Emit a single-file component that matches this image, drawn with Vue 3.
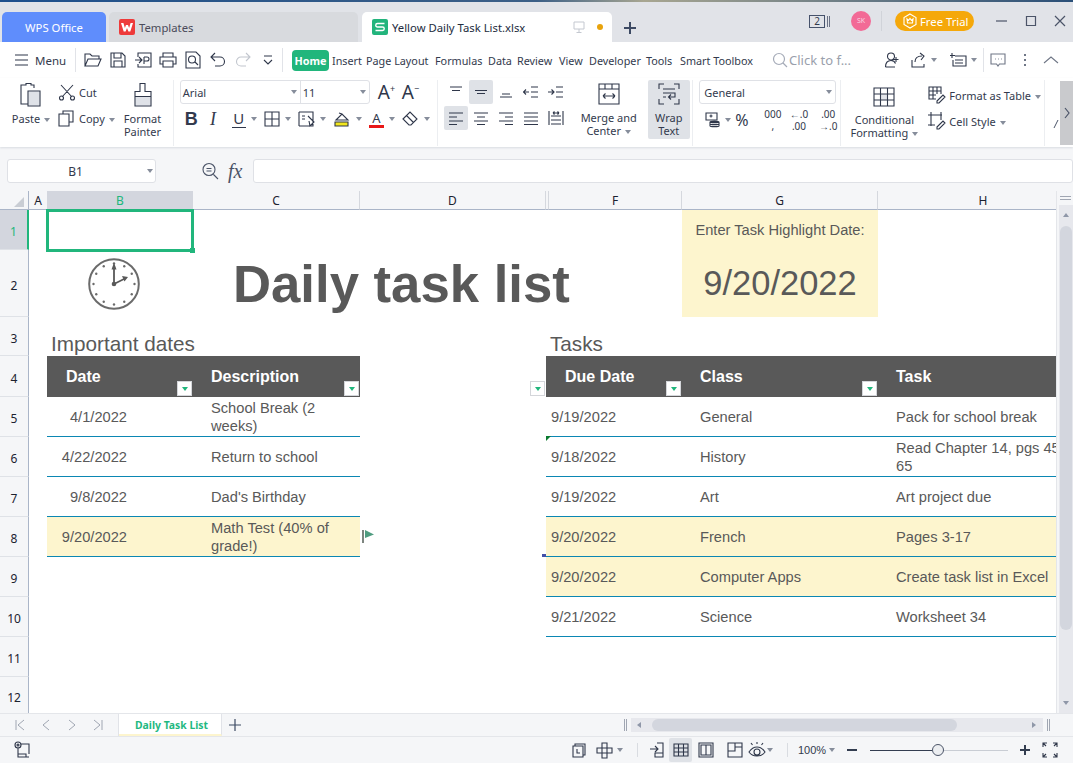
<template>
  <div class="app">
    <div class="wallpaper"></div>

    <!-- Title bar with tabs -->
    <div class="tabbar">
      <div class="tab tab-wps">WPS Office</div>
      <div class="tab tab-tpl">
        <span class="logo logo-w">
          <svg width="12" height="10" viewBox="0 0 12 10"><path d="M0 1h2.4l1.5 5L5 3h2l1.100 3 1.500-5H12L9.300 9.500H7.400L6 6 4.600 9.500H2.700z" fill="#fff" /></svg>
        </span>
        Templates
      </div>
      <div class="tab tab-file">
        <span class="logo logo-s">
          <svg width="12" height="12" viewBox="0 0 12 12"><path d="M10.500 2.500H3.500a1 1 0 000 3.500h5a1.500 1.500 0 010 3.500h-7" fill="none" stroke="#fff" stroke-width="1.400" /></svg>
        </span>
        <span class="tab-name">Yellow Daily Task List.xlsx</span>
        <svg class="tab-monitor" width="14" height="14" viewBox="0 0 14 14"><path d="M2 2h10v7H2zM7 9v3M4.500 12.500h5" fill="none" stroke="#c4c8d0" /></svg>
        <span class="tab-dot"></span>
      </div>
      <svg class="tab-plus" width="14" height="14" viewBox="0 0 14 14"><path d="M7 1v12M1 7h12" stroke="#3d4a63" stroke-width="2" /></svg>
      <div class="spacer"></div>
      <div class="count-box"><span>2</span><i></i><i></i></div>
      <div class="avatar">SK</div>
      <span class="bar-sep"></span>
      <div class="trial">
        <svg width="16" height="16" viewBox="0 0 16 16"><path d="M8 1l6 3.500v7L8 15l-6-3.500v-7zM5 6l1.500 1.500L8 5.500l1.500 2L11 6l-.5 4h-5z" fill="none" stroke="#fff" stroke-width="1.100" /></svg>
        Free Trial
      </div>
      <div class="winbtns">
        <svg width="14" height="14" viewBox="0 0 14 14"><path d="M1 7h11" stroke="#4b5468" stroke-width="1.200" /></svg>
        <svg width="14" height="14" viewBox="0 0 14 14"><path d="M2.500 2.500h9v9h-9z" fill="none" stroke="#4b5468" stroke-width="1.200" /></svg>
        <svg width="14" height="14" viewBox="0 0 14 14"><path d="M2 2l10 10M12 2L2 12" stroke="#4b5468" stroke-width="1.200" /></svg>
      </div>
    </div>

    <!-- Quick access and menu tabs -->
    <div class="quickbar">
      <svg class="ico menu-ico" width="16" height="14" viewBox="0 0 16 14"><path d="M1 2h13M1 7h13M1 12h13" /></svg>
      <span class="menu-label">Menu</span>
      <span class="q-sep first"></span>
      <div class="quick-icons">
        <svg v-for="q in quickIcons" :key="q.d" class="ico" :class="{ dim: q.dim }" width="18" height="20" viewBox="0 0 18 20"><path :d="q.d" /></svg>
      </div>
      <span class="q-sep"></span>
      <div class="menu-tabs">
        <span class="menu-tab home">Home</span>
        <span v-for="m in menus" :key="m.t" class="menu-tab" :style="{ width: m.w + 'px' }">{{ m.t }}</span>
      </div>
      <div class="search">
        <svg width="16" height="16" viewBox="0 0 16 16"><path d="M7 1.500a5.500 5.500 0 100 11 5.500 5.500 0 000-11zM11 11l4 4" fill="none" stroke="#a5abb8" stroke-width="1.200" /></svg>
        <span>Click to f...</span>
      </div>
      <div class="quick-right">
        <svg class="ico" width="16" height="18" viewBox="0 0 16 18"><path d="M7 2a3.500 3.500 0 100 7 3.500 3.500 0 000-7zM1.500 16c0-4 2-6.500 5.500-6.500s4 1.500 4.500 3M1.500 16H11M12 6v5M9.500 8.500h5" /></svg>
        <svg class="ico" width="16" height="18" viewBox="0 0 16 18"><path d="M1 9v7h12v-3M4 11c0-4 3-6 7-6M9 2l4 3-3 4" /></svg>
        <span class="caret"></span>
        <svg class="ico" width="17" height="18" viewBox="0 0 17 18"><path d="M5 5h11v10H3V9M5 9h8M5 12h8M2 2v5M0 4.500h5" /></svg>
        <span class="caret"></span>
        <span class="q-sep short"></span>
        <svg class="ico soft" width="16" height="16" viewBox="0 0 16 16"><path d="M1 2h14v10H9.500L8 14l-1.500-2H1zM5 7h.8M8 7h.8M11 7h.8" /></svg>
        <span class="dots"><i></i><i></i><i></i></span>
        <svg class="ico soft" width="16" height="10" viewBox="0 0 16 10"><path d="M1 8l7-6 7 6" /></svg>
      </div>
    </div>

    <!-- Ribbon -->
    <div class="ribbon">
      <div class="group g-clip">
        <div class="paste">
          <svg class="ico" width="24" height="25" viewBox="0 0 24 25"><path d="M15 6V3h-3V1.500H7V3H2v19h7" /><path d="M9.500 9.500h11v14h-11z" fill="#dfe2e8" stroke="none" /><path d="M9 9h12v15H9z" /></svg>
          <span class="lbl">Paste<span class="caret"></span></span>
        </div>
        <div class="cutcopy">
          <div class="row">
            <svg class="ico" width="18" height="17" viewBox="0 0 18 17"><path d="M3 1l11 12M15 1L4 13M3.500 12a2 2 0 100 4 2 2 0 000-4zM14.500 12a2 2 0 100 4 2 2 0 000-4z" /></svg>
            <span class="lbl">Cut</span>
          </div>
          <div class="row">
            <svg class="ico" width="18" height="17" viewBox="0 0 18 17"><path d="M5 4V1h10v11h-4M1 4h10v12H1z" /></svg>
            <span class="lbl">Copy<span class="caret"></span></span>
          </div>
        </div>
        <div class="painter">
          <svg class="ico" width="20" height="25" viewBox="0 0 20 25"><path d="M2.500 15h15v8.500h-15z" fill="#dfe2e8" stroke="none" /><path d="M7 1.500h5v8h6v5H2v-5h5zM2 14.500V24h16v-9.500" /></svg>
          <span class="lbl center">Format<br />Painter</span>
        </div>
      </div>

      <div class="group g-font">
        <div class="row row-top">
          <div class="select font-select">
            <div class="sel-part sel-name">Arial<span class="caret"></span></div>
            <div class="sel-part sel-size">11<span class="caret"></span></div>
          </div>
          <span class="a-grow">A<sup>+</sup></span>
          <span class="a-grow">A<sup>−</sup></span>
        </div>
        <div class="row row-tools">
          <span class="t-bold">B</span>
          <span class="t-ital">I</span>
          <span class="t-under">U</span><span class="caret"></span>
          <svg class="ico" width="16" height="16" viewBox="0 0 16 16"><path d="M1 1h14v14H1zM8 1v14M1 8h14" /></svg><span class="caret"></span>
          <svg class="ico" width="17" height="17" viewBox="0 0 17 17"><path d="M1 1h14v14H1M1 1v14M4 5h3M4 8h3M10 5l6 6-4 4-1-5" /></svg><span class="caret"></span>
          <svg class="ico" width="18" height="18" viewBox="0 0 18 18"><path d="M3 10l6-6 6 6H3zM6 3l3 1" /><path d="M2 12h13v4H2z" fill="#f2e61c" /></svg><span class="caret"></span>
          <span class="t-color">A</span><span class="caret"></span>
          <svg class="ico" width="17" height="16" viewBox="0 0 17 16"><path d="M1 8l7-7 7 7-6 6H7zM4.500 4.500l7 7" /></svg><span class="caret"></span>
        </div>
      </div>

      <div class="group g-align">
        <div class="align-grid">
          <span v-for="(a, i) in alignIcons" :key="i" class="align-cell" :class="{ on: a.on }">
            <svg class="ico" width="16" height="16" viewBox="0 0 16 16"><path :d="a.d" /></svg>
          </span>
        </div>
        <div class="big-tool merge">
          <svg class="ico" width="22" height="22" viewBox="0 0 22 22"><path d="M1 1h20v20H1zM1 6h20M7 1v5M14 1v5M5 13h12M5 13l2.500-2.500M5 13l2.500 2.500M17 13l-2.500-2.500M17 13l-2.500 2.500" /></svg>
          <span class="lbl center">Merge and<br />Center<span class="caret"></span></span>
        </div>
        <div class="big-tool wrap">
          <svg class="ico" width="24" height="22" viewBox="0 0 24 22"><path d="M2 6V1h5M17 1h5v5M2 16v5h5M17 21h5v-5M6 6h12M6 10h12v4h-6M14 11.500L11.500 14l2.500 2.500M6 14h3" /></svg>
          <span class="lbl center">Wrap<br />Text</span>
        </div>
      </div>

      <div class="group g-num">
        <div class="select num-select">General<span class="caret"></span></div>
        <div class="row row-num">
          <svg class="ico" width="16" height="18" viewBox="0 0 16 18"><path d="M1 2h11v7H1zM6 3.500v3M4.500 5h3M5 11c0-1 9-1 9 0v4c0 1-9 1-9 0zM5 11c0 1 9 1 9 0M5 13c0 1 9 1 9 0" /></svg><span class="caret"></span>
          <span class="t-pct">%</span>
          <span class="t-thou">000<br />,</span>
          <span class="t-dec">←.0<br />.00</span>
          <span class="t-dec">.00<br />→.0</span>
        </div>
      </div>

      <div class="group g-style">
        <div class="big-tool cond">
          <svg class="ico" width="22" height="20" viewBox="0 0 22 20"><path d="M7.500 7h7v6h-7z" fill="#e3e5ea" stroke="none" /><path d="M1 1h20v18H1zM1 7h20M1 13h20M7.500 1v18M14.500 1v18" /></svg>
          <span class="lbl center">Conditional<br />Formatting<span class="caret"></span></span>
        </div>
        <div class="style-col">
          <div class="row">
            <svg class="ico" width="18" height="18" viewBox="0 0 18 18"><path d="M8 13H1V1h12v7M1 5h12M1 9h7M5 1v12M9 1v7M9 15l6-6 2 2-6 6H9z" /></svg>
            <span class="lbl">Format as Table<span class="caret"></span></span>
          </div>
          <div class="row">
            <svg class="ico" width="18" height="18" viewBox="0 0 18 18"><path d="M3 0v14M0 3h14M13 0v8M0 13h7M9 15l6-6 2 2-6 6H9z" /></svg>
            <span class="lbl">Cell Style<span class="caret"></span></span>
          </div>
        </div>
      </div>

      <svg class="clipped" width="6" height="8" viewBox="0 0 6 8"><path d="M5 0L1 8" stroke="#4b5468" /></svg>
      <div class="ribbon-more">
        <svg width="8" height="12" viewBox="0 0 8 12"><path d="M2 1l4 5-4 5" fill="none" stroke="#4b5468" stroke-width="1.200" /></svg>
      </div>
    </div>

    <!-- Formula bar -->
    <div class="formula">
      <div class="namebox"><span>B1</span><span class="caret"></span></div>
      <svg class="zoom-ico" width="18" height="18" viewBox="0 0 18 18"><path d="M8 1.500a6 6 0 100 12 6 6 0 000-12zM12.500 12.500L17 17M5.500 6.500h5M5.500 9h5" fill="none" stroke="#4b5468" stroke-width="1.100" /></svg>
      <span class="fx">fx</span>
      <div class="fx-input"></div>
    </div>

    <!-- Sheet -->
    <div class="workbook">
      <div class="grid">
        <div class="corner"><i></i></div>
        <div v-for="(c, i) in colHeads" :key="c.t + i" class="col-head" :class="{ active: c.on, sep: c.sep }" :style="{ gridColumn: c.col }">{{ c.t }}</div>
        <div v-for="r in 12" :key="r" class="row-head" :class="{ active: r === 1 }" :style="{ gridRow: r + 1 }">{{ r }}</div>

        <div class="highlight-top">Enter Task Highlight Date:</div>
        <div class="highlight-date">9/20/2022</div>

        <div class="clock-cell">
          <svg width="52" height="52" viewBox="0 0 52 52">
            <circle cx="26" cy="26" r="24.800" fill="#fff" stroke="#6b6b6b" stroke-width="2" />
            <circle v-for="t in clockTicks" :key="t.x" :cx="t.x" :cy="t.y" r="1.200" fill="#6b6b6b" />
            <path d="M26 26V9M26 26l12-6" stroke="#595959" stroke-width="1.800" fill="none" />
            <path d="M26 4.500l-2.500 7h5zM40 19l-6-1 2.500 5.500z" fill="#595959" />
            <circle cx="26" cy="26" r="2.300" fill="#595959" />
          </svg>
        </div>
        <div class="title">Daily task list</div>

        <div class="section sec-left">Important dates</div>
        <div class="section sec-right">Tasks</div>

        <div v-for="h in headers" :key="h.t" class="th" :class="h.cls">{{ h.t }}</div>

        <div
          v-for="(c, i) in cells"
          :key="i"
          class="td"
          :class="[c.cls, { yellow: c.yellow }]"
          :style="{ gridColumn: c.col, gridRow: c.row }"
        >
          <span>{{ c.t }}</span>
        </div>

        <div v-for="f in filters" :key="f" class="filter" :style="{ gridColumn: f }"><i></i></div>

        <div class="selection"><i></i></div>
        <svg class="flag" width="14" height="14" viewBox="0 0 14 14"><path d="M1 0v13" stroke="#7d8580" stroke-width="2" /><path d="M3 0l9 4.500L3 8z" fill="#4f9c80" /></svg>
        <i class="error-mark"></i>
        <i class="blue-mark"></i>
      </div>

      <div class="vscroll">
        <div class="split-h"></div>
        <div class="track">
          <i class="arrow-up"></i>
          <div class="thumb"></div>
          <i class="arrow-down"></i>
        </div>
      </div>
    </div>

    <!-- Sheet tabs -->
    <div class="sheetbar">
      <div class="sheet-nav">
        <svg v-for="n in navIcons" :key="n" width="12" height="14" viewBox="0 0 12 14"><path :d="n" fill="none" stroke="#a0a6b2" /></svg>
      </div>
      <div class="sheet-tab">Daily Task List</div>
      <svg class="sheet-add" width="14" height="14" viewBox="0 0 14 14"><path d="M7 1v12M1 7h12" stroke="#3d4a63" stroke-width="1.200" /></svg>
      <div class="spacer"></div>
      <span class="splitter"></span>
      <div class="hscroll">
        <i class="arrow-left"></i>
        <div class="hthumb"></div>
        <i class="arrow-right"></i>
      </div>
      <span class="splitter"></span>
    </div>

    <!-- Status bar -->
    <div class="status">
      <svg class="ico status-first" width="18" height="18" viewBox="0 0 18 18"><path d="M4 1a3 3 0 100 6 3 3 0 000-6zM4 3a1 1 0 100 2 1 1 0 000-2zM7 3h8v10M4 7v9h8v-3H4M12 16h3" /></svg>
      <div class="spacer"></div>
      <svg class="ico" width="14" height="15" viewBox="0 0 14 15"><path d="M3 3V1h10v11h-2M1 3h10v11H1zM5 6v4h3" /></svg>
      <svg class="ico st-view" width="17" height="17" viewBox="0 0 17 17"><path d="M6 1h5v5h5v5h-5v5H6v-5H1V6h5zM6 6h5v5H6z" /></svg>
      <span class="caret"></span>
      <span class="q-sep st-sep"></span>
      <svg class="ico st-read" width="15" height="16" viewBox="0 0 15 16"><path d="M7 1h6v14H5v-4h8M0 7h8M5 4l3 3-3 3" /></svg>
      <span class="st-on">
        <svg class="ico" width="16" height="16" viewBox="0 0 16 16"><path d="M1 2h14v12H1zM1 6h14M1 10h14M5.500 2v12M10.500 2v12" /></svg>
      </span>
      <svg class="ico st-gap" width="16" height="16" viewBox="0 0 16 16"><path d="M1 1h14v14H1zM3 3h10v10H3zM8 3v10" /></svg>
      <svg class="ico st-gap2" width="16" height="16" viewBox="0 0 16 16"><path d="M1 1h14v14H1zM1 9h7V1M8 5h7" /></svg>
      <svg class="ico st-eye" width="18" height="18" viewBox="0 0 18 18"><path d="M1 11c2-3 5-5 8-5s6 2 8 5c-2 3-5 4-8 4s-6-1-8-4zM9 8a3 3 0 100 6 3 3 0 000-6zM9 1v2M3 2l1.500 2M15 2l-1.500 2" /></svg>
      <span class="caret eye-caret"></span>
      <span class="q-sep st-sep"></span>
      <span class="zoom-pct">100%</span><span class="caret"></span>
      <span class="zoom-minus"></span>
      <div class="slider"><div class="slider-fill"></div><div class="slider-knob"></div><div class="slider-rest"></div></div>
      <svg class="zoom-plus" width="12" height="12" viewBox="0 0 12 12"><path d="M6 1v10M1 6h10" stroke="#333d50" stroke-width="2" /></svg>
      <svg class="ico st-full" width="16" height="16" viewBox="0 0 16 16"><path d="M1 5V1h4M1 1l3 3M15 5V1h-4M15 1l-3 3M1 11v4h4M1 15l3-3M15 11v4h-4M15 15l-3-3" /></svg>
    </div>
  </div>
</template>

<script setup>
const quickIcons = [
  { d: 'M1 16V4h5l2 2h7v3M1 16l3-7h13l-3 7z' },
  { d: 'M2 3h11l3 3v11H2zM5 3v5h7V3M5 17v-6h8v6' },
  { d: 'M4 7V3h13v14H4v-3M1 10h7M5 7l3 3-3 3M10 7h3a2 2 0 010 4h-3V7m0 4v3' },
  { d: 'M4 7V3h10v4M4 14H1V7h16v7h-3M4 11h10v6H4z' },
  { d: 'M2 2h10l4 4v12H2zM8 6a3.500 3.500 0 100 7 3.500 3.500 0 000-7zM11 12l3 3' },
  { d: 'M6 3L2 7l4 4M2 7h9a4.500 4.500 0 010 9H6' },
  { d: 'M12 3l4 4-4 4M16 7H7a4.500 4.500 0 000 9h5', dim: true },
  { d: 'M5 6h8M5 10l4 4 4-4' }
]

const menus = [
  { t: 'Insert', w: 34 },
  { t: 'Page Layout', w: 69 },
  { t: 'Formulas', w: 53 },
  { t: 'Data', w: 29 },
  { t: 'Review', w: 42 },
  { t: 'View', w: 30 },
  { t: 'Developer', w: 57 },
  { t: 'Tools', w: 34 },
  { t: 'Smart Toolbox', w: 74 }
]

const alignIcons = [
  { d: 'M2 3h12M4 6.500h8' },
  { d: 'M2 6.500h12M4 9.500h8', on: true },
  { d: 'M4 10h8M2 13h12' },
  { d: 'M8 3h7M8 13h7M8 8h7M6 8H0M3 5.500L.5 8 3 10.500' },
  { d: 'M8 3h7M8 13h7M8 8h7M0 8h6M3.500 5.500L6 8l-2.500 2.500' },
  { d: 'M1 3h14M1 7h8M1 11h14M1 14.500h8', on: true },
  { d: 'M1 3h14M4 7h8M1 11h14M4 14.500h8' },
  { d: 'M1 3h14M7 7h8M1 11h14M7 14.500h8' },
  { d: 'M1 3h14M1 7h14M1 11h14M1 14.500h14' },
  { d: 'M1 1v14M15 1v14M3 6h10M3 10h10M3 14h10M5 3h6M5 3l1.500-1.500M5 3l1.500 1.500M11 3L9.500 1.500M11 3L9.500 4.500' }
]

const colHeads = [
  { t: 'A', col: 2 },
  { t: 'B', col: 3, on: true },
  { t: 'C', col: 4, sep: true },
  { t: 'D', col: 5, sep: true },
  { t: '', col: 6, sep: true },
  { t: 'F', col: 7, sep: true },
  { t: 'G', col: 8, sep: true },
  { t: 'H', col: 9 }
]

const headers = [
  { t: 'Date', cls: 'th-date' },
  { t: 'Description', cls: 'th-desc' },
  { t: 'Due Date', cls: 'th-due' },
  { t: 'Class', cls: 'th-class' },
  { t: 'Task', cls: 'th-task' }
]

const leftRows = [
  ['4/1/2022', 'School Break (2 weeks)'],
  ['4/22/2022', 'Return to school'],
  ['9/8/2022', "Dad's Birthday"],
  ['9/20/2022', 'Math Test (40% of grade!)', true]
]

const rightRows = [
  ['9/19/2022', 'General', 'Pack for school break'],
  ['9/18/2022', 'History', 'Read Chapter 14, pgs 45-65'],
  ['9/19/2022', 'Art', 'Art project due'],
  ['9/20/2022', 'French', 'Pages 3-17', true],
  ['9/20/2022', 'Computer Apps', 'Create task list in Excel', true],
  ['9/21/2022', 'Science', 'Worksheet 34']
]

const cells = []
leftRows.forEach((r, i) => {
  const row = i + 6
  cells.push({ t: r[0], col: '3', row, cls: 'td-date', yellow: r[2] })
  cells.push({ t: r[1], col: '4', row, cls: 'td-desc', yellow: r[2] })
})
rightRows.forEach((r, i) => {
  const row = i + 6
  cells.push({ t: r[0], col: '6 / 8', row, cls: 'td-due', yellow: r[3] })
  cells.push({ t: r[1], col: '8', row, cls: 'td-text', yellow: r[3] })
  cells.push({ t: r[2], col: '9', row, cls: 'td-task', yellow: r[3] })
})

const filters = [3, 4, 5, 7, 8]

const clockTicks = Array.from({ length: 12 }, (_, i) => {
  const a = (i * Math.PI) / 6
  return { x: 26 + Math.sin(a) * 20.5, y: 26 - Math.cos(a) * 20.5 }
})

const navIcons = [
  'M2 2v10M10 2L4 7l6 5',
  'M9 2L3 7l6 5',
  'M3 2l6 5-6 5',
  'M2 2l6 5-6 5M10 2v10'
]
</script>

<style>
html,
body {
  margin: 0;
  overflow: hidden;
}
</style>

<style scoped>
.app {
  width: 1073px;
  height: 763px;
  display: flex;
  flex-direction: column;
  font-family: "Noto Sans", sans-serif;
  font-size: 11.5px;
  color: #333a4d;
  background: #f5f6f8;
  overflow: hidden;
}

.spacer {
  flex: 1;
}

.wallpaper {
  height: 2px;
  background: linear-gradient(90deg, #1d4f8c, #3c5f86 50%, #a8a691 60%, #2a4f78);
}

.ico {
  flex: none;
  fill: none;
  stroke: #2f374a;
  stroke-width: 1.100;
}

.ico.dim {
  stroke: #c2c6ce;
}

.ico.soft {
  stroke: #6f7686;
}

.caret {
  display: inline-block;
  flex: none;
  width: 0;
  height: 0;
  border: 3px solid transparent;
  border-top: 4px solid #868d9b;
  border-bottom: 0;
  margin-left: 4px;
  vertical-align: middle;
}

/* Tabs */
.tabbar {
  height: 40px;
  flex: none;
  display: flex;
  align-items: flex-end;
  background: #e1e3e8;
  padding-left: 2px;
}

.tab {
  height: 30px;
  display: flex;
  align-items: center;
  border-radius: 5px 5px 0 0;
  font-size: 11.3px;
  box-sizing: border-box;
  white-space: nowrap;
}

.tab-wps {
  width: 104px;
  justify-content: center;
  background: #5f8dfc;
  color: #fff;
}

.tab-tpl {
  width: 249px;
  margin-left: 3px;
  padding-left: 10px;
  background: #d8dade;
  color: #4b4b5a;
  gap: 4px;
}

.tab-file {
  width: 250px;
  margin-left: 4px;
  padding-left: 10px;
  background: #fff;
  color: #222b3d;
  gap: 5px;
}

.logo {
  width: 16px;
  height: 16px;
  border-radius: 2px;
  display: flex;
  align-items: center;
  justify-content: center;
}

.logo-w {
  background: #ee3a3a;
}

.logo-s {
  background: #22b47c;
}

.tab-name {
  width: 175px;
  margin-left: -1px;
}

.tab-dot {
  width: 6px;
  height: 6px;
  border-radius: 50%;
  background: #e8a30c;
  margin-left: 6px;
}

.tab-plus {
  margin: 0 0 7px 11px;
}

.count-box {
  align-self: center;
  display: flex;
  align-items: center;
  gap: 1px;
  margin-top: -2px;
}

.count-box span {
  width: 14px;
  height: 11px;
  border: 1px solid #46526b;
  font-size: 10px;
  line-height: 11px;
  text-align: center;
  margin-right: 1px;
}

.count-box i {
  width: 1px;
  height: 11px;
  background: #6b7386;
}

.avatar {
  align-self: center;
  margin: -2px 0 0 21px;
  width: 20px;
  height: 20px;
  border-radius: 50%;
  background: #f26a96;
  color: #f8d5e1;
  font-size: 7px;
  line-height: 20px;
  text-align: center;
}

.bar-sep {
  align-self: center;
  width: 1px;
  height: 20px;
  margin: -2px 13px 0 10px;
  background: #d0d3d9;
}

.trial {
  align-self: center;
  margin-top: -2px;
  width: 79px;
  height: 20px;
  box-sizing: border-box;
  padding-left: 7px;
  display: flex;
  align-items: center;
  gap: 2px;
  border-radius: 10px;
  background: #f5a80a;
  color: #fff;
  font-size: 11.3px;
  white-space: nowrap;
}

.winbtns {
  align-self: center;
  margin: -2px 6px 0 21px;
  display: flex;
  gap: 15px;
}

/* Quick access */
.quickbar {
  height: 36px;
  flex: none;
  display: flex;
  align-items: center;
  background: #fff;
  padding-left: 14px;
  box-sizing: border-box;
}

.menu-label {
  margin-left: 5px;
  width: 40px;
  font-size: 11.5px;
}

.q-sep {
  width: 1px;
  height: 24px;
  background: #e1e3e8;
  flex: none;
}

.q-sep.first {
  margin-right: 8px;
}

.quick-icons {
  display: flex;
  gap: 7px;
  margin-right: 5px;
}

.menu-tabs {
  display: flex;
  align-items: center;
  margin-left: 9px;
}

.menu-tab {
  white-space: nowrap;
  font-size: 10.8px;
  flex: none;
  padding-left: 3px;
  box-sizing: border-box;
}

.menu-tab.home {
  width: 37px;
  height: 21px;
  line-height: 21px;
  padding: 0;
  text-align: center;
  border-radius: 4px;
  background: #21b67c;
  color: #fff;
  font-weight: 700;
}

.search {
  margin-left: 21px;
  width: 112px;
  display: flex;
  align-items: center;
  gap: 1px;
  font-size: 13px;
  color: #9a9fac;
  white-space: nowrap;
}

.quick-right {
  display: flex;
  align-items: center;
}

.quick-right .ico:nth-child(2) {
  margin-left: 11px;
}

.quick-right .ico:nth-child(4) {
  margin-left: 13px;
}

.q-sep.short {
  margin: 0 6px 0 6px;
}

.dots {
  display: flex;
  flex-direction: column;
  gap: 3px;
  margin: 0 17px 0 18px;
}

.dots i {
  width: 2px;
  height: 2px;
  background: #6f7686;
}

/* Ribbon */
.ribbon {
  height: 69px;
  flex: none;
  display: flex;
  background: #fff;
  box-shadow: 0 1px 2px rgba(90, 100, 120, 0.18);
  position: relative;
}

.group {
  height: 66px;
  margin-top: 2px;
  display: flex;
  box-sizing: border-box;
  border-right: 1px solid #eceef1;
}

.row {
  display: flex;
  align-items: center;
}

.lbl {
  font-size: 11px;
  line-height: 13px;
  white-space: nowrap;
}

.lbl.center {
  text-align: center;
}

.g-clip {
  width: 174px;
}

.paste {
  width: 46px;
  margin-left: 8px;
  display: flex;
  flex-direction: column;
  align-items: center;
  gap: 5px;
  padding-top: 2px;
}

.cutcopy {
  margin-left: 4px;
  width: 62px;
  display: flex;
  flex-direction: column;
  gap: 9px;
  padding-top: 4px;
}

.cutcopy .row {
  gap: 3px;
}

.painter {
  width: 45px;
  display: flex;
  flex-direction: column;
  align-items: center;
  gap: 5px;
  padding-top: 2px;
}

.g-font {
  width: 264px;
  flex-direction: column;
  padding-left: 6px;
}

.select {
  background: #fff;
  border: 1px solid #dfe1e6;
  border-radius: 3px;
  box-sizing: border-box;
  font-size: 11px;
}

.font-select {
  width: 190px;
  height: 24px;
  display: flex;
}

.sel-part {
  display: flex;
  align-items: center;
  justify-content: space-between;
  padding: 0 3px 0 2px;
  box-sizing: border-box;
}

.sel-name {
  width: 120px;
  border-right: 1px solid #dfe1e6;
}

.sel-size {
  flex: 1;
}

.a-grow {
  width: 24px;
  font-size: 19px;
  line-height: 22px;
  margin-left: 8px;
  color: #2f374a;
  white-space: nowrap;
}

.a-grow sup {
  font-size: 9px;
  line-height: 0;
}

.row-top .a-grow + .a-grow {
  margin-left: 0;
}

.row-tools {
  margin-top: 5px;
  height: 20px;
  padding-left: 5px;
}

.t-bold {
  width: 25px;
  font-family: "Liberation Sans", sans-serif;
  font-size: 18px;
  font-weight: 700;
}

.t-ital {
  width: 23px;
  font-family: "Liberation Serif", serif;
  font-style: italic;
  font-size: 18px;
  padding-left: 1px;
  box-sizing: border-box;
}

.t-under {
  width: 15px;
  border-bottom: 1px solid #2f374a;
  font-size: 15px;
  line-height: 17px;
  text-align: center;
}

.t-color {
  width: 15px;
  border-bottom: 3px solid #e81818;
  font-size: 13px;
  line-height: 14px;
  text-align: center;
}

.row-tools .caret {
  margin: 0 7px 0 5px;
}

.g-align {
  width: 256px;
  padding-left: 6px;
}

.align-grid {
  width: 125px;
  display: grid;
  grid-template-columns: repeat(5, 25px);
  grid-template-rows: 24px 24px;
  row-gap: 2px;
}

.align-cell {
  display: flex;
  align-items: center;
  justify-content: center;
  width: 24px;
  border-radius: 2px;
}

.align-cell.on {
  background: #dfe2e7;
}

.big-tool {
  display: flex;
  flex-direction: column;
  align-items: center;
  padding-top: 3px;
  box-sizing: border-box;
}

.big-tool .lbl {
  margin-top: 6px;
}

.merge {
  width: 78px;
  margin-left: 1px;
}

.wrap {
  width: 42px;
  height: 59px;
  background: #dfe2e7;
  border-radius: 2px;
}

.g-num {
  width: 148px;
  flex-direction: column;
  padding-left: 6px;
}

.num-select {
  width: 137px;
  height: 24px;
  display: flex;
  align-items: center;
  justify-content: space-between;
  padding: 0 3px 0 4px;
}

.row-num {
  margin-top: 4px;
  padding-left: 6px;
  height: 24px;
}

.t-pct {
  font-size: 16px;
  margin-left: 4px;
  width: 22px;
}

.t-thou,
.t-dec {
  font-size: 10px;
  line-height: 12px;
  text-align: center;
  white-space: nowrap;
}

.t-thou {
  width: 30px;
  margin-left: 3px;
}

.t-dec {
  width: 26px;
}

.t-dec + .t-dec {
  margin-left: 5px;
}

.g-style {
  width: 204px;
}

.cond {
  width: 84px;
  margin-left: 1px;
  padding-top: 7px;
}

.cond .lbl {
  margin-top: 6px;
}

.style-col {
  display: flex;
  flex-direction: column;
  gap: 8px;
  padding: 6px 0 0 2px;
}

.style-col .row {
  gap: 3px;
}

.clipped {
  margin: 42px 0 0 8px;
  flex: none;
}

.ribbon-more {
  margin: 3px 0 0 1px;
  width: 13px;
  height: 64px;
  background: #c9cacd;
  display: flex;
  align-items: center;
  justify-content: center;
}

/* Formula bar */
.formula {
  height: 44px;
  flex: none;
  display: flex;
  align-items: center;
  box-sizing: border-box;
  padding: 4px 0 0 7px;
  background: #f5f6f8;
}

.namebox {
  width: 149px;
  height: 24px;
  box-sizing: border-box;
  padding-right: 2px;
  display: flex;
  align-items: center;
  background: #fff;
  border: 1px solid #dfe1e6;
  border-radius: 3px;
  font-size: 12px;
}

.namebox span:first-child {
  flex: 1;
  text-align: center;
}

.zoom-ico {
  margin-left: 45px;
}

.fx {
  width: 18px;
  margin-left: 9px;
  font-family: "Liberation Serif", serif;
  font-style: italic;
  font-size: 20px;
  color: #4b5468;
}

.fx-input {
  flex: 1;
  margin-left: 7px;
  height: 24px;
  background: #fff;
  border: 1px solid #dfe1e6;
  border-radius: 3px;
  box-sizing: border-box;
}

/* Sheet */
.workbook {
  height: 523px;
  flex: none;
  display: flex;
  background: #fff;
  border-bottom: 1px solid #e4e6ea;
  box-sizing: border-box;
}

.grid {
  width: 1056px;
  overflow: hidden;
  display: grid;
  grid-template-columns: 29px 18px 146px 167px 186px 3px 133px 196px 210px;
  grid-template-rows: 19px 40px 67px 39px 41px 40px 40px 40px 40px 40px 40px 40px 37px;
  font-family: "Liberation Sans", sans-serif;
  font-size: 14.67px;
  color: #595959;
}

.corner {
  grid-column: 1;
  grid-row: 1;
  background: #f5f6f8;
  border-right: 1px solid #aab5c8;
  border-bottom: 1px solid #aab5c8;
  position: relative;
}

.corner i {
  position: absolute;
  right: 4px;
  bottom: 2px;
  border: 5px solid #c9cdd4;
  border-top-color: transparent;
  border-left-color: transparent;
}

.col-head {
  grid-row: 1;
  box-sizing: border-box;
  background: #f5f6f8;
  border-bottom: 1px solid #aab5c8;
  color: #1c2230;
  font-family: "Noto Sans", sans-serif;
  font-size: 12px;
  line-height: 19px;
  text-align: center;
}

.col-head.sep {
  border-right: 1px solid #d5d8de;
}

.col-head.active {
  background: #d3d6de;
  color: #21b67c;
}

.row-head {
  grid-column: 1;
  box-sizing: border-box;
  padding-top: 4px;
  display: flex;
  align-items: center;
  justify-content: center;
  background: #f5f6f8;
  border-right: 1px solid #aab5c8;
  border-bottom: 1px solid #dfe2e7;
  color: #1c2230;
  font-family: "Noto Sans", sans-serif;
  font-size: 12px;
}

.row-head.active {
  background: #d3d6de;
  color: #21b67c;
  border-right: 2px solid #21b67c;
}

.highlight-top {
  grid-column: 8;
  grid-row: 2;
  background: #fdf5ce;
  text-align: center;
  line-height: 41px;
}

.highlight-date {
  grid-column: 8;
  grid-row: 3;
  background: #fdf5ce;
  display: flex;
  align-items: center;
  justify-content: center;
  font-size: 34.5px;
}

.clock-cell {
  grid-column: 3;
  grid-row: 3;
  display: flex;
  align-items: center;
  padding-left: 41px;
}

.title {
  grid-column: 4 / 7;
  grid-row: 3;
  display: flex;
  align-items: center;
  padding-left: 40px;
  font-size: 52.7px;
  font-weight: 700;
  white-space: nowrap;
}

.section {
  grid-row: 4;
  align-self: end;
  font-size: 20.7px;
  line-height: 26px;
  margin-bottom: -1px;
}

.sec-left {
  grid-column: 3 / 5;
  padding-left: 4px;
}

.sec-right {
  grid-column: 6 / 9;
  padding-left: 4px;
}

.th {
  grid-row: 5;
  background: #595959;
  color: #fff;
  font-size: 16px;
  font-weight: 700;
  line-height: 41px;
}

.th-date {
  grid-column: 3;
  padding-left: 19px;
}

.th-desc {
  grid-column: 4;
  padding-left: 18px;
}

.th-due {
  grid-column: 6 / 8;
  padding-left: 19px;
}

.th-class {
  grid-column: 8;
  padding-left: 18px;
}

.th-task {
  grid-column: 9;
  padding-left: 18px;
}

.td {
  display: flex;
  align-items: center;
  box-sizing: border-box;
  border-bottom: 1px solid #0b87b3;
  line-height: 18px;
}

.td.yellow {
  background: #fdf5ce;
}

.td-date {
  justify-content: flex-end;
  padding-right: 66px;
}

.td-desc {
  padding: 0 15px 0 18px;
}

.td-due {
  padding-left: 5px;
}

.td-text {
  padding-left: 18px;
}

.td-task {
  padding: 0 18px 0 18px;
}

.filter {
  grid-row: 5;
  justify-self: end;
  align-self: end;
  width: 15px;
  height: 15px;
  margin: 0 1px 1px 0;
  box-sizing: border-box;
  border: 1px solid #d4d6da;
  background: #fff;
  display: flex;
  align-items: center;
  justify-content: center;
}

.filter i {
  border: 3px solid transparent;
  border-top: 4px solid #21b67c;
  border-bottom: 0;
}

.selection {
  grid-column: 3;
  grid-row: 2;
  box-sizing: border-box;
  border: 3px solid #21b67c;
  position: relative;
  margin: -1px;
  height: 43px;
}

.selection i {
  position: absolute;
  right: -4px;
  bottom: -4px;
  width: 5px;
  height: 5px;
  background: #21b67c;
}

.flag {
  grid-column: 5;
  grid-row: 9;
  align-self: center;
  margin: 0 0 1px 2px;
}

.error-mark {
  grid-column: 6 / 8;
  grid-row: 7;
  width: 0;
  height: 0;
  margin-top: -1px;
  border-top: 5px solid #0a7a2f;
  border-right: 5px solid transparent;
}

.blue-mark {
  grid-column: 5;
  grid-row: 9;
  justify-self: end;
  align-self: end;
  width: 4px;
  height: 3px;
  background: #4450a8;
}

/* Vertical scrollbar */
.vscroll {
  flex: 1;
  display: flex;
  flex-direction: column;
  background: #f5f6f8;
  border-left: 1px solid #e4e6ea;
  padding-left: 2px;
}

.split-h {
  height: 14px;
  flex: none;
  position: relative;
}

.split-h::after {
  content: "";
  display: block;
  height: 2px;
  margin: 5px 2px 0 1px;
  border-top: 1px solid #a0a6b2;
  border-bottom: 1px solid #a0a6b2;
}

.track {
  flex: 1;
  display: flex;
  flex-direction: column;
  align-items: center;
  background: #e7e8ed;
}

.arrow-up {
  margin-top: 8px;
  border: 3px solid transparent;
  border-bottom: 4px solid #8f97a8;
  border-top: 0;
}

.thumb {
  margin-top: 9px;
  width: 12px;
  height: 404px;
  border-radius: 6px;
  background: #d3d6de;
}

.arrow-down {
  margin-top: auto;
  margin-bottom: 8px;
  border: 3px solid transparent;
  border-top: 4px solid #8f97a8;
  border-bottom: 0;
}

/* Sheet tabs */
.sheetbar {
  height: 23px;
  flex: none;
  display: flex;
  align-items: center;
  padding-right: 23px;
  background: #f5f6f8;
  border-bottom: 1px solid #e4e6ea;
  box-sizing: border-box;
}

.sheet-nav {
  width: 119px;
  box-sizing: border-box;
  padding-left: 14px;
  display: flex;
  gap: 14px;
  height: 100%;
  align-items: center;
  border-right: 1px solid #e1e3e8;
}

.sheet-tab {
  width: 103px;
  height: 100%;
  box-sizing: border-box;
  padding-left: 3px;
  background: #fff;
  border-right: 1px solid #e1e3e8;
  border-bottom: 2px solid #fdf5ce;
  color: #1fb981;
  font-size: 10.4px;
  font-weight: 700;
  text-align: center;
  line-height: 22px;
}

.sheet-add {
  margin-left: 6px;
}

.splitter {
  width: 3px;
  height: 12px;
  flex: none;
  border-left: 1px solid #a0a6b2;
  border-right: 1px solid #a0a6b2;
  box-sizing: border-box;
}

.hscroll {
  width: 412px;
  height: 14px;
  margin: 0 4px;
  display: flex;
  align-items: center;
  background: #e7e8ed;
}

.arrow-left {
  margin-left: 6px;
  border: 3px solid transparent;
  border-right: 4px solid #8f97a8;
  border-left: 0;
}

.hthumb {
  margin-left: 11px;
  width: 305px;
  height: 12px;
  border-radius: 6px;
  background: #d3d6de;
}

.arrow-right {
  margin-left: auto;
  margin-right: 7px;
  border: 3px solid transparent;
  border-left: 4px solid #8f97a8;
  border-right: 0;
}

/* Status bar */
.status {
  flex: 1;
  display: flex;
  align-items: center;
  background: #f5f6f8;
  padding: 0 15px 0 14px;
}

.st-view {
  margin-left: 10px;
}

.st-sep {
  height: 14px;
  margin: 0 10px 0 14px;
  background: #d9dce1;
}

.st-read {
  margin-left: 2px;
}

.st-on {
  margin-left: 4px;
  width: 23px;
  height: 24px;
  display: flex;
  align-items: center;
  justify-content: center;
  background: #dfe2e7;
  border-radius: 2px;
}

.st-gap {
  margin-left: 6px;
}

.st-gap2 {
  margin-left: 13px;
}

.st-eye {
  margin-left: 5px;
}

.eye-caret {
  margin-left: 1px;
}

.zoom-pct {
  font-size: 11px;
  font-family: "Liberation Sans", sans-serif;
  width: 27px;
}

.zoom-minus {
  width: 10px;
  height: 2px;
  margin-left: 12px;
  background: #333d50;
}

.slider {
  width: 138px;
  margin-left: 13px;
  display: flex;
  align-items: center;
}

.slider-fill {
  width: 62px;
  height: 1px;
  background: #333d50;
}

.slider-knob {
  width: 12px;
  height: 12px;
  flex: none;
  box-sizing: border-box;
  border: 1px solid #4b5468;
  border-radius: 50%;
  background: #eceef1;
}

.slider-rest {
  flex: 1;
  height: 1px;
  background: #c9cdd4;
}

.zoom-plus {
  margin-left: 11px;
}

.st-full {
  margin-left: 11px;
}
</style>
